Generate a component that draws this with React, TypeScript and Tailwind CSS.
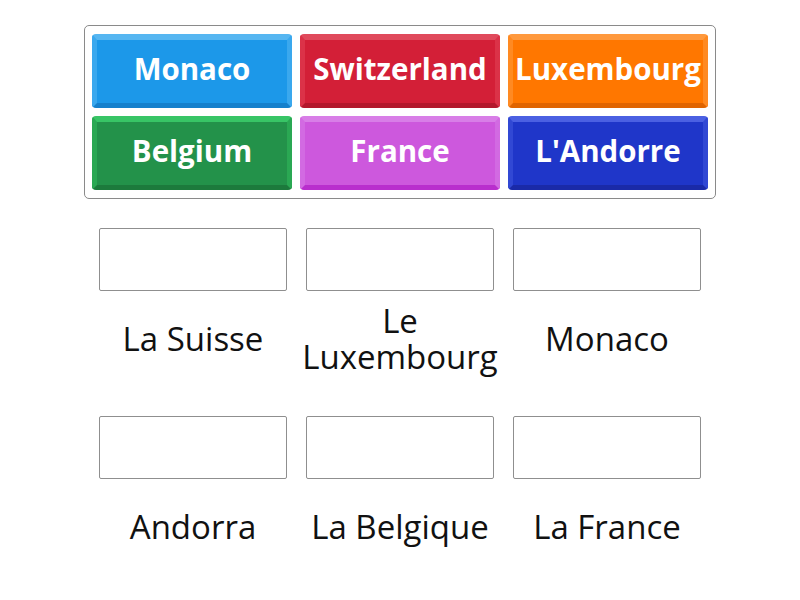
import React from "react";

interface Tile {
  label: string;
  face: string;
}

const tiles: Tile[] = [
  { label: "Monaco", face: "bg-[#1c98e9] border-t-[#56b6f1] border-x-[#3aa8ee] border-b-[#1580cc]" },
  { label: "Switzerland", face: "bg-[#d31f37] border-t-[#e04a5c] border-x-[#db3248] border-b-[#b3182c]" },
  { label: "Luxembourg", face: "bg-[#ff7700] border-t-[#ff993d] border-x-[#ff8a22] border-b-[#e06400]" },
  { label: "Belgium", face: "bg-[#23924a] border-t-[#38c566] border-x-[#2aa853] border-b-[#1c7a3c]" },
  { label: "France", face: "bg-[#cd58dd] border-t-[#d87ee7] border-x-[#d26ae2] border-b-[#b92ecd]" },
  { label: "L'Andorre", face: "bg-[#1f36c9] border-t-[#4b60e2] border-x-[#3148d4] border-b-[#1a2aa8]" },
];

const targets = ["La Suisse", "Le Luxembourg", "Monaco", "Andorra", "La Belgique", "La France"];

export default function App() {
  return (
    <div className="w-[800px] h-[600px] bg-white flex flex-col items-center pt-[25px] font-['Open_Sans',sans-serif]">
      <div className="w-[632px] border border-[#8a8a8a] rounded-[5px] px-[7px] py-[8px] grid grid-cols-3 gap-2">
        {tiles.map((t) => (
          <div
            key={t.label}
            className={`h-[74px] rounded-[4px] border-t-[6px] border-x-[5px] border-b-[5px] pb-[5px] flex items-center justify-center text-white font-bold text-[29.5px] leading-none whitespace-nowrap ${t.face}`}
          >
            {t.label}
          </div>
        ))}
      </div>

      <div className="mt-[29px] grid grid-cols-[188px_188px_188px] gap-x-[19px] gap-y-[29px]">
        {targets.map((t) => (
          <div key={t} className="flex flex-col">
            <div className="h-[63px] border border-[#8f8f8f] rounded-[2px] bg-white" />
            <div className="h-[96px] flex items-center justify-center text-center text-[33px] leading-[36px] text-[#111]">
              {t}
            </div>
          </div>
        ))}
      </div>
    </div>
  );
}
